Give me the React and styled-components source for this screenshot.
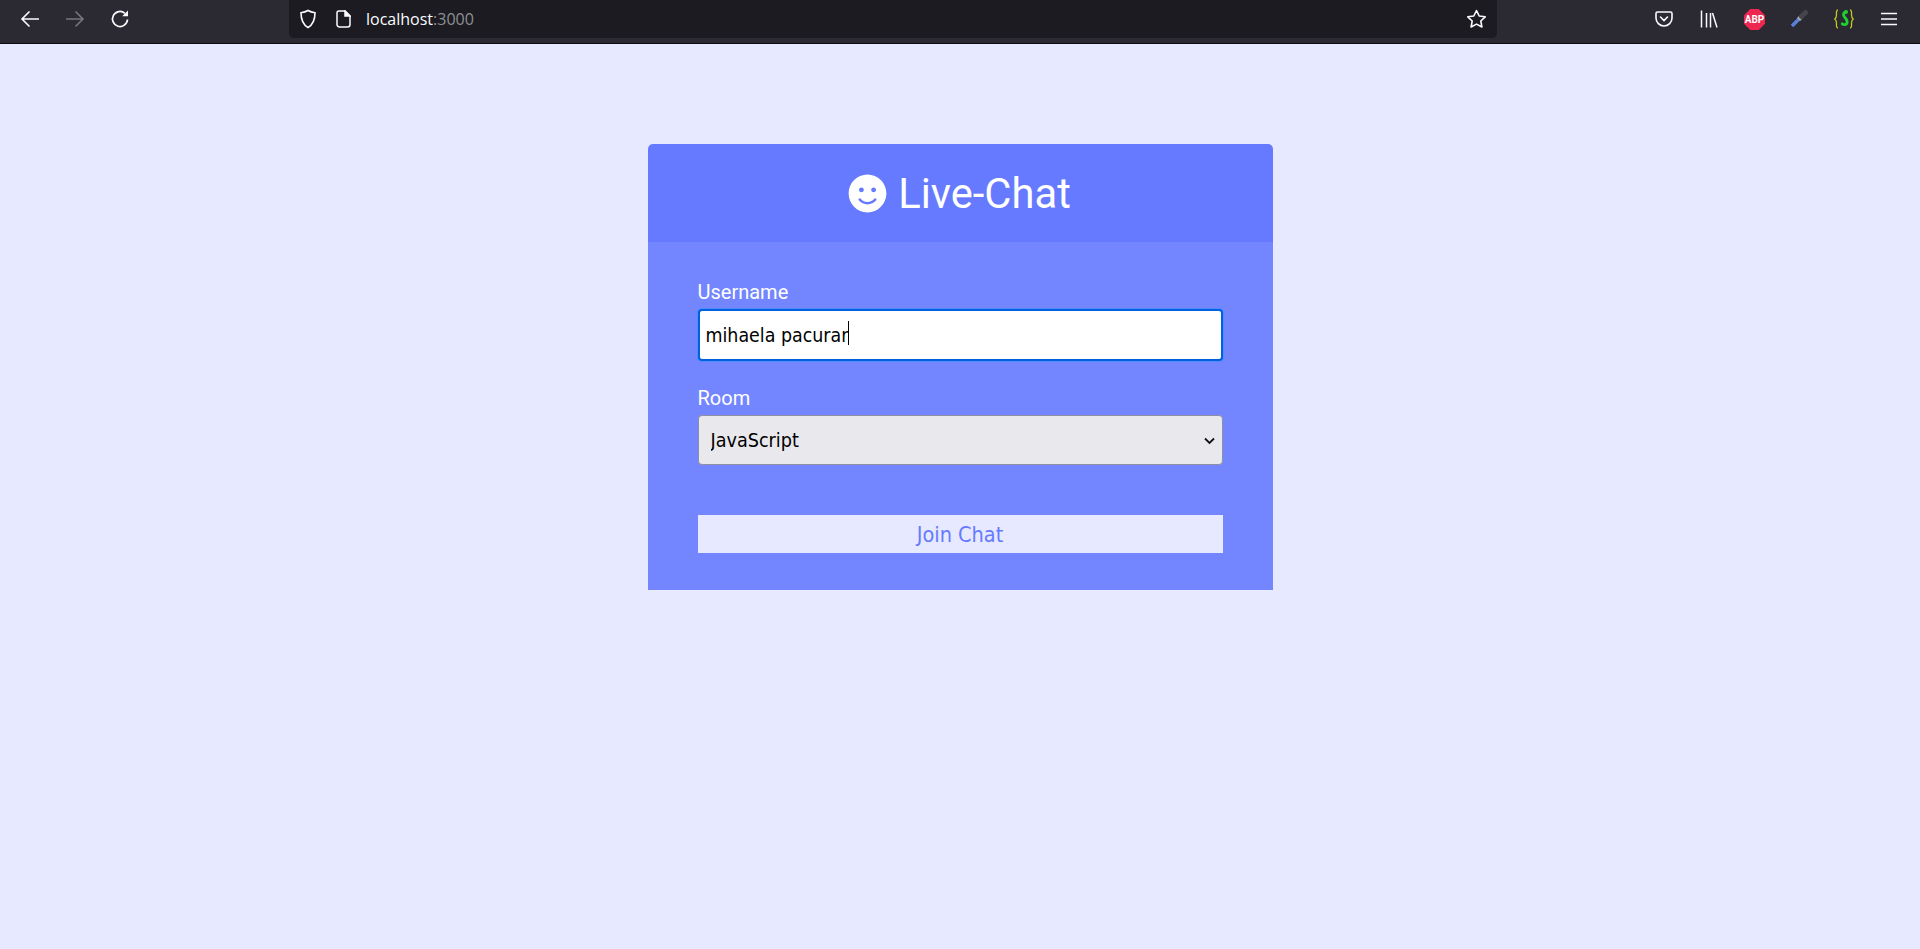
import React from 'react';
import styled, { createGlobalStyle } from 'styled-components';
import { FaSmile } from 'react-icons/fa';

const GlobalStyle = createGlobalStyle`
  html, body {
    margin: 0;
    height: 100%;
    background: #e6e9ff;
    font-family: Roboto, "Liberation Sans", sans-serif;
    overflow: hidden;
  }
  * {
    box-sizing: border-box;
  }
`;

const Toolbar = styled.header`
  height: 44px;
  display: flex;
  align-items: flex-start;
  background: #2b2a33;
  border-bottom: 1px solid #0c0c0f;
`;

const NavGroup = styled.nav`
  width: 289px;
  height: 38px;
  padding-left: 19px;
  display: flex;
  align-items: center;
  gap: 23px;
`;

const ToolIcon = styled.span`
  width: ${({ $w }) => $w || 32}px;
  height: 38px;
  display: flex;
  align-items: center;
  justify-content: center;
  flex: none;
  color: ${({ $dim }) => ($dim ? '#77767d' : '#fbfbfe')};
`;

const UrlBar = styled.div`
  width: 1208px;
  height: 38px;
  padding: 0 10px;
  display: flex;
  align-items: center;
  background: #1c1b22;
  border-radius: 0 0 5px 5px;
  color: #fbfbfe;
  font-size: 16px;
  font-family: "Open Sans", sans-serif;
`;

const PageIcon = styled.span`
  margin-left: 19px;
  display: flex;
`;

const UrlText = styled.span`
  margin-left: 15px;
  flex: 1;
`;

const UrlPort = styled.span`
  color: #8f8f93;
`;

const Extensions = styled.div`
  flex: 1;
  height: 38px;
  padding-left: 151px;
  display: flex;
  align-items: center;
  gap: 13px;
`;

const Page = styled.main`
  padding-top: 100px;
  display: flex;
  justify-content: center;
`;

const Card = styled.section`
  width: 625px;
  color: #fff;
`;

const CardHeader = styled.div`
  height: 98px;
  padding: 1px 1px 0 0;
  display: flex;
  align-items: center;
  justify-content: center;
  gap: 11px;
  background: #667aff;
  border-radius: 5px 5px 0 0;
`;

const Title = styled.h1`
  margin: 0;
  font-size: 41.700px;
  font-weight: 400;
  line-height: 1;
`;

const CardBody = styled.form`
  height: 348px;
  padding: 39px 50px 0;
  background: #7386ff;
`;

const Row = styled.div`
  position: relative;
  margin-bottom: ${({ $gap }) => $gap}px;
`;

const Label = styled.label`
  display: block;
  margin-bottom: 6px;
  font-size: 20px;
  line-height: 22px;
`;

const TextField = styled.input`
  display: block;
  width: 100%;
  height: 52px;
  padding: 0 6px;
  border: 2px solid #0060df;
  border-radius: 4px;
  outline: none;
  box-shadow: 0 0 0 1px #4d8dff;
  background: #fff;
  color: #000;
  font-family: "DejaVu Sans", sans-serif;
  font-stretch: condensed;
  font-size: 19.400px;
`;

const Caret = styled.span`
  position: absolute;
  left: 150px;
  top: 40px;
  width: 1px;
  height: 24px;
  background: #000;
`;

const Select = styled.select`
  display: block;
  width: 100%;
  height: 50px;
  padding: 0 12px;
  appearance: none;
  border: 1px solid #8f8f9d;
  border-radius: 4px;
  background-color: #e9e8ec;
  color: #000;
  font-family: "DejaVu Sans", sans-serif;
  font-stretch: condensed;
  font-size: 19.600px;
`;

const SelectArrow = styled.svg`
  position: absolute;
  right: 8px;
  bottom: 20px;
  pointer-events: none;
`;

const JoinButton = styled.button`
  display: block;
  width: 100%;
  height: 38px;
  border: 0;
  background: #e6e9ff;
  color: #667aff;
  font-family: "DejaVu Sans", sans-serif;
  font-stretch: condensed;
  font-size: 21.500px;
`;

const ArrowSvg = styled.svg`
  transform: scaleX(${({ $dir }) => $dir});
`;

const Back = ({ dir = 1 }) => (
  <ArrowSvg $dir={dir} width="20" height="18" viewBox="0 0 20 18" fill="none" stroke="currentColor" strokeWidth="1.6">
    <path d="M19 9H2M9.500 1.500 2 9l7.500 7.500" />
  </ArrowSvg>
);

const Reload = () => (
  <svg width="20" height="20" viewBox="0 0 20 20" fill="none" stroke="currentColor" strokeWidth="1.7">
    <path d="M17.500 10.500a7.500 7.500 0 1 1-2.600-6.200" />
    <path d="M18 1.500v5.800h-5.800z" fill="currentColor" stroke="none" />
  </svg>
);

const Shield = () => (
  <svg width="18" height="20" viewBox="0 0 18 20" fill="none" stroke="currentColor" strokeWidth="1.600">
    <path d="M9 1.500c2 1.200 4.400 1.900 7 2.200 0 7-1.800 11.800-7 14.800C3.800 15.500 2 10.700 2 3.700c2.600-.3 5-1 7-2.200z" />
  </svg>
);

const DocIcon = () => (
  <svg width="15" height="18" viewBox="0 0 15 18" fill="none" stroke="currentColor" strokeWidth="1.500">
    <path d="M3 1h6l5 5v8.500A2.500 2.500 0 0 1 11.500 17h-8A2.500 2.500 0 0 1 1 14.500V3a2 2 0 0 1 2-2z" />
    <path d="M9 1v5h5z" fill="currentColor" />
  </svg>
);

const Star = () => (
  <svg width="21" height="20" viewBox="0 0 21 20" fill="none" stroke="currentColor" strokeWidth="1.600" strokeLinejoin="round">
    <path d="M10.500 1.500 13.200 7l6 .8-4.400 4.200 1.100 6-5.400-2.900L5.100 18l1.100-6L1.800 7.800l6-.8z" />
  </svg>
);

const Pocket = () => (
  <svg width="18" height="16" viewBox="0 0 18 16" fill="none" stroke="currentColor" strokeWidth="1.600">
    <path d="M2.500 1h13A1.500 1.500 0 0 1 17 2.500V7A8 8 0 0 1 1 7V2.500A1.500 1.500 0 0 1 2.500 1z" />
    <path d="m5.500 6 3.500 3.500L12.500 6" strokeLinecap="round" />
  </svg>
);

const Library = () => (
  <svg width="18" height="18" viewBox="0 0 18 18" fill="none" stroke="currentColor" strokeWidth="1.500">
    <path d="M1.500 0.500v17M6.500 3v14.500M10.500 3v14.500M12.500 3l4.500 14.500" />
  </svg>
);

const Abp = () => (
  <svg width="21" height="21" viewBox="0 0 21 21">
    <path d="M6.200 0h8.600l6.200 6.200v8.600L14.800 21H6.200L0 14.800V6.200z" fill="#ee2750" />
    <text x="10.500" y="14.400" fontSize="10" fontWeight="700" fontFamily="Roboto, sans-serif" fill="#fff" textAnchor="middle">ABP</text>
  </svg>
);

const Dropper = () => (
  <svg width="20" height="20" viewBox="0 0 20 20" fill="none">
    <path d="M3 17 10 10" stroke="#5b80d8" strokeWidth="3.600" />
    <path d="M9.500 10.500 12 8" stroke="#a5a9b3" strokeWidth="4.400" />
    <path d="M12.500 7.500 16.500 3.500" stroke="#45444b" strokeWidth="5" strokeLinecap="round" />
  </svg>
);

const Regex = () => (
  <svg width="20" height="20" viewBox="0 0 20 20" fill="none">
    <path d="M4 1C2 1 2.500 4 2.500 6S2 9 .8 10c1.200 1 1.700 2 1.700 4s-.5 5 1.500 5M16 1c2 0 1.500 3 1.500 5s.5 3 1.700 4c-1.200 1-1.700 2-1.700 4s.5 5-1.500 5" stroke="#c3c81c" strokeWidth="1.300" />
    <path d="M11.500 3c-2.500.5-2.500 3-1 5 1.500 2 3.300 3.500 2.500 6-.6 1.800-3 2.200-4.800.8" stroke="#1dd32f" strokeWidth="2.800" strokeLinecap="round" />
    <circle cx="12" cy="3" r="2" fill="#1dd32f" />
  </svg>
);

const Menu = () => (
  <svg width="16" height="14" viewBox="0 0 16 14" stroke="currentColor" strokeWidth="1.500">
    <path d="M0 1.500h16M0 7h16M0 12.500h16" />
  </svg>
);

const App = () => (
  <>
    <GlobalStyle />
    <Toolbar>
      <NavGroup>
        <ToolIcon $w={22}><Back /></ToolIcon>
        <ToolIcon $w={22} $dim><Back dir={-1} /></ToolIcon>
        <ToolIcon $w={22}><Reload /></ToolIcon>
      </NavGroup>
      <UrlBar>
        <Shield />
        <PageIcon><DocIcon /></PageIcon>
        <UrlText>
          localhost<UrlPort>:3000</UrlPort>
        </UrlText>
        <Star />
      </UrlBar>
      <Extensions>
        <ToolIcon><Pocket /></ToolIcon>
        <ToolIcon><Library /></ToolIcon>
        <ToolIcon><Abp /></ToolIcon>
        <ToolIcon><Dropper /></ToolIcon>
        <ToolIcon><Regex /></ToolIcon>
        <ToolIcon><Menu /></ToolIcon>
      </Extensions>
    </Toolbar>
    <Page>
      <Card>
        <CardHeader>
          <FaSmile size={39} />
          <Title>Live-Chat</Title>
        </CardHeader>
        <CardBody>
          <Row $gap={26}>
            <Label htmlFor="username">Username</Label>
            <TextField id="username" defaultValue="mihaela pacurar" readOnly />
            <Caret />
          </Row>
          <Row $gap={50}>
            <Label htmlFor="room">Room</Label>
            <Select id="room" defaultValue="JavaScript">
              <option>JavaScript</option>
              <option>Python</option>
              <option>PHP</option>
              <option>C#</option>
              <option>Ruby</option>
              <option>Java</option>
            </Select>
            <SelectArrow width="11" height="8" viewBox="0 0 11 8" fill="none" stroke="#111" strokeWidth="1.800">
              <path d="m1 1.500 4.500 4.500L10 1.500" />
            </SelectArrow>
          </Row>
          <JoinButton type="button">Join Chat</JoinButton>
        </CardBody>
      </Card>
    </Page>
  </>
);

export default App;
